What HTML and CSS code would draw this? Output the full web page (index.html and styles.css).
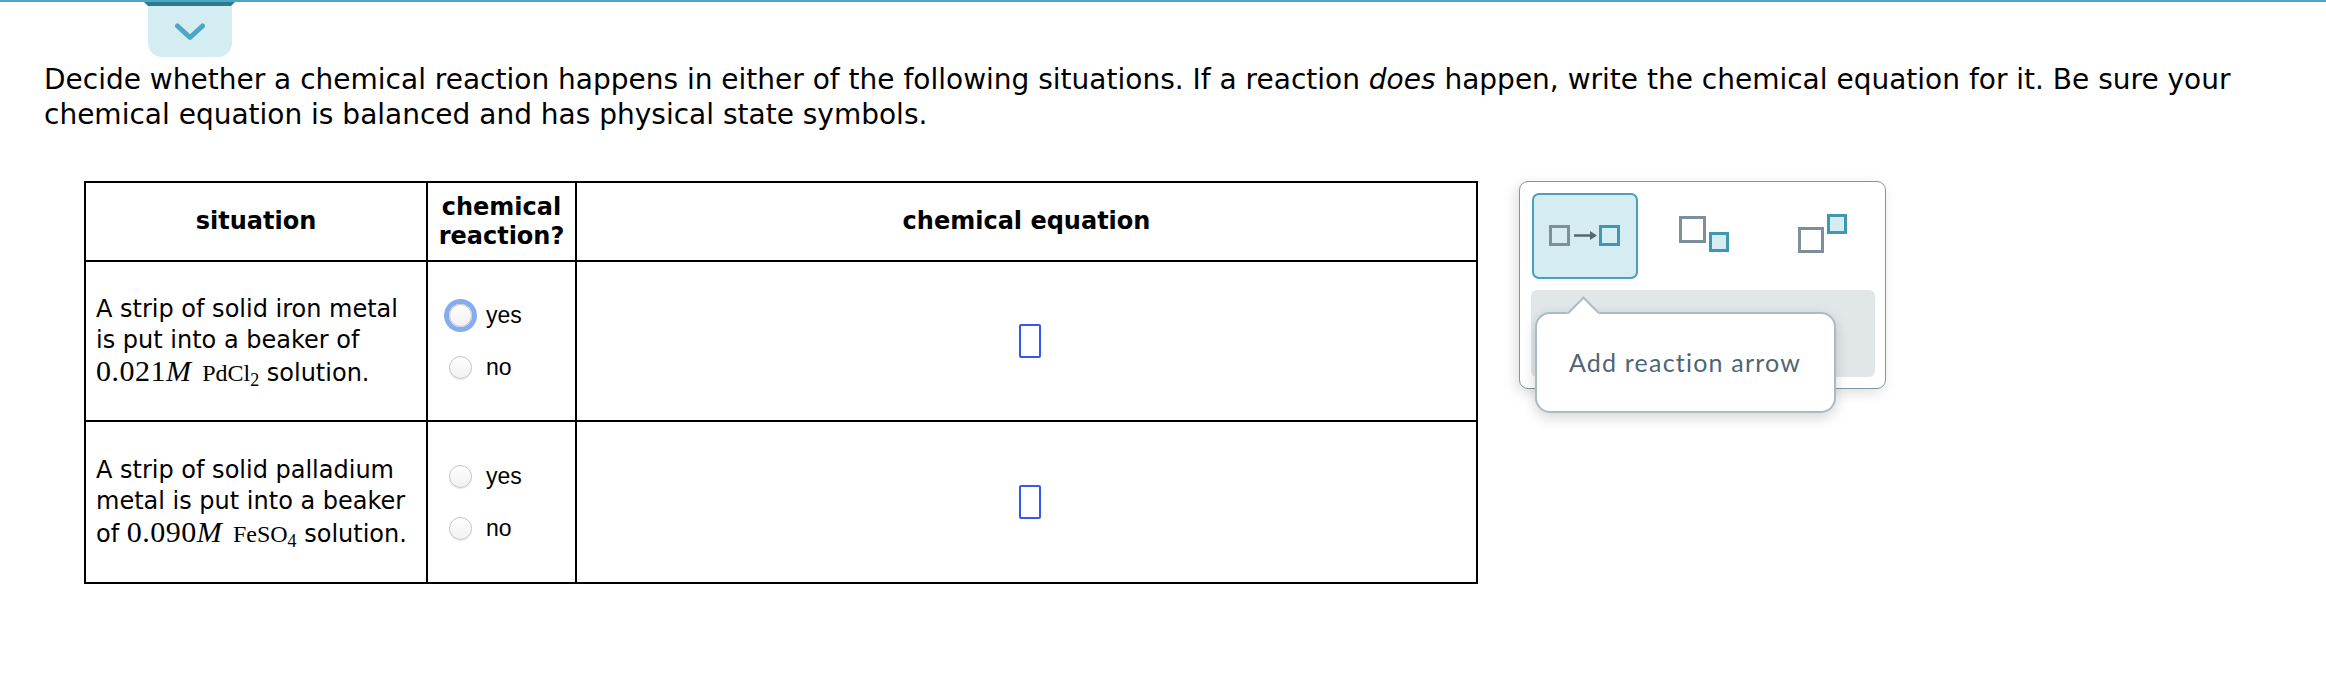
FILE: index.html
```html
<!DOCTYPE html>
<html lang="en">
<head>
<meta charset="utf-8">
<title>Chemical reactions</title>
<link rel="stylesheet" href="styles.css">
</head>
<body>
<div class="topbar"></div>
<div class="tab">
  <svg class="chev" width="32" height="18" viewBox="0 0 32 18"><path d="M3.5 3 L16 14.5 L28.5 3" fill="none" stroke="#4aa8c4" stroke-width="5" stroke-linecap="round" stroke-linejoin="round"/></svg>
</div>
<p class="prompt">Decide whether a chemical reaction happens in either of the following situations. If a reaction <em>does</em> happen, write the chemical equation for it. Be sure your chemical equation is balanced and has physical state symbols.</p>
<div class="work">
  <table class="grid">
    <colgroup><col class="c1"><col class="c2"><col class="c3"></colgroup>
    <thead>
      <tr><th>situation</th><th>chemical reaction?</th><th>chemical equation</th></tr>
    </thead>
    <tbody>
      <tr class="r1">
        <td class="sit">A strip of solid iron metal is put into a beaker of <span class="math">0.021<i>M</i></span> <span class="chem">PdCl<sub>2</sub></span> solution.</td>
        <td class="choice">
          <label class="opt"><input type="radio" name="q1" class="focus"><span>yes</span></label>
          <label class="opt"><input type="radio" name="q1"><span>no</span></label>
        </td>
        <td class="eq"><span class="slot"></span></td>
      </tr>
      <tr class="r2">
        <td class="sit">A strip of solid palladium metal is put into a beaker of <span class="math">0.090<i>M</i></span> <span class="chem">FeSO<sub>4</sub></span> solution.</td>
        <td class="choice">
          <label class="opt"><input type="radio" name="q2"><span>yes</span></label>
          <label class="opt"><input type="radio" name="q2"><span>no</span></label>
        </td>
        <td class="eq"><span class="slot"></span></td>
      </tr>
    </tbody>
  </table>
  <div class="palette">
    <div class="tools">
      <button class="tool active">
        <svg width="102" height="82" viewBox="0 0 102 82">
          <rect x="16.5" y="31.5" width="18" height="18" fill="none" stroke="#7d9099" stroke-width="3"/>
          <line x1="40" y1="40.5" x2="58" y2="40.5" stroke="#55686f" stroke-width="2.5"/>
          <polygon points="56,36 63,40.5 56,45" fill="#55686f"/>
          <rect x="66.5" y="31.5" width="18" height="18" fill="#d5ecf3" stroke="#3f98b0" stroke-width="3"/>
        </svg>
      </button>
      <button class="tool">
        <svg width="102" height="82" viewBox="0 0 102 82">
          <rect x="28.5" y="22.5" width="24" height="24" fill="none" stroke="#7d9099" stroke-width="3"/>
          <rect x="58.5" y="38.5" width="17" height="17" fill="#d5ecf3" stroke="#3f98b0" stroke-width="3"/>
        </svg>
      </button>
      <button class="tool">
        <svg width="102" height="82" viewBox="0 0 102 82">
          <rect x="29.5" y="33.5" width="23" height="23" fill="none" stroke="#7d9099" stroke-width="3"/>
          <rect x="58.5" y="20.5" width="17" height="17" fill="#d5ecf3" stroke="#3f98b0" stroke-width="3"/>
        </svg>
      </button>
    </div>
    <div class="tray"></div>
    <div class="tip">Add reaction arrow</div>
  </div>
</div>
</body>
</html>
```
FILE: styles.css
```css
html, body {
  margin: 0;
  background: #fff;
}
body {
  font-family: "DejaVu Sans", Verdana, sans-serif;
  color: #000;
  width: 2326px;
}

.topbar {
  height: 2px;
  background: #4aa8c4;
}

.tab {
  position: relative;
  margin-left: 148px;
  width: 84px;
  height: 55px;
  box-sizing: border-box;
  padding-top: 21px;
  background: #d4edf3;
  border-radius: 0 0 14px 14px;
  display: flex;
  justify-content: center;
  align-items: flex-start;
}
.tab::before {
  content: "";
  position: absolute;
  top: 0;
  left: -4px;
  right: -3px;
  height: 4px;
  background: #2f7a8e;
  clip-path: polygon(0 0, 100% 0, calc(100% - 4px) 100%, 4px 100%);
}
.chev { display: block; }

.prompt {
  margin: 5px 40px 0 44px;
  font-size: 28px;
  line-height: 35px;
}

.work {
  display: flex;
  align-items: flex-start;
  gap: 41px;
  margin-top: 49px;
  padding-left: 84px;
}

.grid {
  border-collapse: collapse;
  table-layout: fixed;
  width: 1392px;
  flex: none;
}
.c1 { width: 342px; }
.c2 { width: 149px; }
.c3 { width: 901px; }

.grid th,
.grid td {
  border: 2px solid #000;
}
.grid th {
  height: 77px;
  padding: 0 8px;
  font-size: 24px;
  line-height: 29px;
  font-weight: bold;
  text-align: center;
  vertical-align: middle;
}
.r1 td { height: 158px; }
.r2 td { height: 160px; }

.sit {
  padding: 0 10px;
  font-size: 24px;
  line-height: 31px;
  vertical-align: middle;
}
.math {
  font-family: "Liberation Serif", "Times New Roman", serif;
  font-size: 30px;
  line-height: 1;
  letter-spacing: 0.5px;
}
.math i { font-style: italic; }
.chem {
  margin-left: 3px;
  font-family: "Liberation Serif", "Times New Roman", serif;
  font-size: 24px;
  line-height: 1;
}
.chem sub {
  font-size: 18px;
  vertical-align: -5px;
  line-height: 0;
}

.choice {
  padding: 0 0 0 21px;
  vertical-align: middle;
}
.opt {
  display: flex;
  align-items: center;
  gap: 14px;
  height: 26px;
  font-family: "Liberation Sans", Arial, sans-serif;
  font-size: 23px;
}
.opt + .opt { margin-top: 26px; }
.opt input {
  appearance: none;
  -webkit-appearance: none;
  margin: 0;
  width: 23px;
  height: 23px;
  border-radius: 50%;
  border: 1px solid #c4c4c4;
  background: linear-gradient(#ffffff, #f1f1f1);
  box-shadow: inset 0 1px 1px rgba(255,255,255,0.8), 0 1px 1px rgba(0,0,0,0.08);
  box-sizing: border-box;
  flex: none;
}
.opt input.focus {
  box-shadow: 0 0 0 5px #86acf0;
}

.eq {
  text-align: center;
  vertical-align: middle;
  padding: 0 0 0 6px;
}
.slot {
  display: inline-block;
  width: 22px;
  height: 34px;
  box-sizing: border-box;
  border: 2px solid #3358f0;
  border-radius: 2px;
  vertical-align: middle;
}

.palette {
  position: relative;
  flex: none;
  width: 367px;
  height: 208px;
  box-sizing: border-box;
  padding: 10.5px 10.5px 0 11.5px;
  border: 1.5px solid #82959e;
  border-radius: 9px;
  background: #fff;
  box-shadow: -3px 4px 14px rgba(0, 0, 0, 0.13);
}
.tools {
  display: grid;
  grid-template-columns: repeat(3, 106px);
  column-gap: 12px;
}
.tool {
  height: 86px;
  padding: 0;
  margin: 0;
  border: 2px solid transparent;
  border-radius: 7px;
  background: transparent;
  display: flex;
  align-items: center;
  justify-content: center;
}
.tool svg { display: block; }
.tool.active {
  background: #d5ecf3;
  border-color: #4ba0b8;
}
.tray {
  margin: 11px 0 0 -1px;
  width: 344px;
  height: 87px;
  border-radius: 6px;
  background: #e1e6e9;
}
.tip {
  position: absolute;
  left: 14.5px;
  top: 129.5px;
  width: 301px;
  height: 101px;
  box-sizing: border-box;
  border: 2px solid #aabbc3;
  border-radius: 15px;
  background: #fff;
  box-shadow: 0 5px 14px rgba(0, 0, 0, 0.16);
  display: flex;
  align-items: center;
  justify-content: center;
  font-family: Lato, "Open Sans", sans-serif;
  font-size: 25px;
  letter-spacing: 1.2px;
  color: #4d6673;
}
.tip::before {
  content: "";
  position: absolute;
  left: 35.5px;
  top: -13px;
  width: 21px;
  height: 21px;
  background: #fff;
  border-left: 2px solid #aabbc3;
  border-top: 2px solid #aabbc3;
  transform: rotate(45deg);
}
```
